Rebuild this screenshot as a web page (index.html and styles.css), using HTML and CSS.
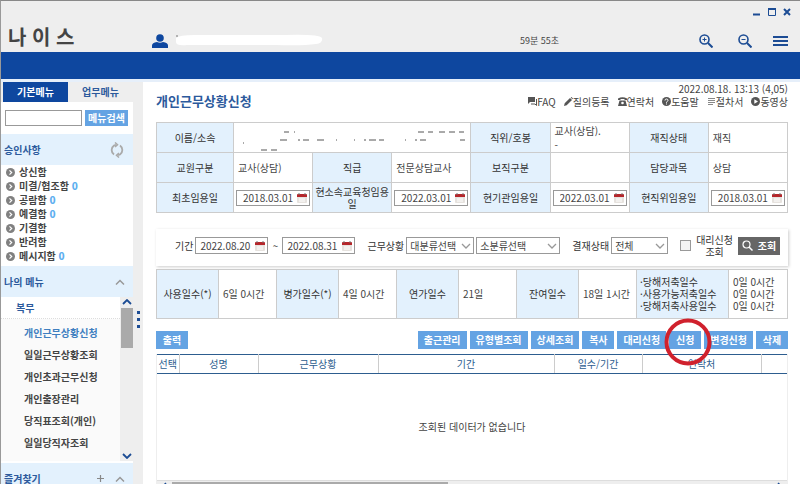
FILE: index.html
```html
<!DOCTYPE html>
<html lang="ko">
<head>
    <meta charset="UTF-8">
    <title>나이스 - 개인근무상황신청</title>
    <link rel="stylesheet" href="styles.css">
</head>
<body>
    <!-- icons used more than once -->
    <svg class="defs" width="0" height="0">
        <symbol id="cal" viewBox="0 0 10 10">
            <rect x="0" y="1" width="10" height="9" rx="1" fill="#e6e2de"/>
            <path d="M0 4V1.500Q0 1 1 1H9Q10 1 10 1.500V4z" fill="#b5262b"/>
            <path d="M2 0v2M8 0v2" stroke="#777" stroke-width="1"/>
            <path d="M2 6h6M2 8h6" stroke="#fff" stroke-width="1"/>
        </symbol>
        <symbol id="down" viewBox="0 0 10 6">
            <path d="M1 1l4 4 4-4" fill="none" stroke="#999" stroke-width="1.300"/>
        </symbol>
        <symbol id="go" viewBox="0 0 9 9">
            <circle cx="4.500" cy="4.500" r="4.500" fill="#808080"/>
            <path d="M3.500 2.300l2.200 2.200-2.200 2.200" fill="none" stroke="#fff" stroke-width="1.200"/>
        </symbol>
    </svg>

    <header>
        <div class="window-buttons">
            <button type="button" aria-label="최소화"><svg width="8" height="8"><path d="M0 6.500h7" stroke="#1c4c94" stroke-width="2"/></svg></button>
            <button type="button" aria-label="최대화"><svg width="8" height="8"><path d="M.5 1v6.500h7V1" fill="none" stroke="#1c4c94"/><path d="M0 1h8" stroke="#1c4c94" stroke-width="2"/></svg></button>
            <button type="button" aria-label="닫기"><svg width="8" height="8"><path d="M1 1l6 6M7 1L1 7" stroke="#1c4c94" stroke-width="2"/></svg></button>
        </div>
        <div class="header-row">
            <h1>나 이 스</h1>
            <div class="user">
                <svg width="16" height="14" viewBox="0 0 16 14"><circle cx="8" cy="4" r="3.800" fill="#0e479f"/><path d="M0 14v-2.500Q0 8.500 5 8q3 1.500 6 0 5 .5 5 3.500V14z" fill="#0e479f"/></svg>
                <svg width="148" height="13" viewBox="0 0 148 13"><path d="M1 4Q4 1 20 1h90q34-1 37 3 1 5-6 6-14 2-40 1H12Q1 12 1 8z" fill="#fff"/><path d="M1 2h2" stroke="#777"/></svg>
            </div>
            <span class="timer">59분 55초</span>
            <div class="header-tools">
                <button type="button" aria-label="확대"><svg width="14" height="14"><circle cx="5.500" cy="5.500" r="4.500" fill="none" stroke="#1c4c94" stroke-width="1.600"/><path d="M3.500 5.500h4M5.500 3.500v4" stroke="#1c4c94"/><path d="M9 9l4.500 4.500" stroke="#1c4c94" stroke-width="2"/></svg></button>
                <button type="button" aria-label="축소"><svg width="14" height="14"><circle cx="5.500" cy="5.500" r="4.500" fill="none" stroke="#1c4c94" stroke-width="1.600"/><path d="M3.500 5.500h4" stroke="#1c4c94"/><path d="M9 9l4.500 4.500" stroke="#1c4c94" stroke-width="2"/></svg></button>
                <button type="button" aria-label="전체메뉴"><svg width="15" height="12"><path d="M0 2h15M0 6h15M0 10h15" stroke="#1c4c94" stroke-width="1.800"/></svg></button>
            </div>
        </div>
    </header>
    <nav class="top-menu"></nav>

    <div class="layout">
        <aside>
            <div class="tabs">
                <button type="button" class="active">기본메뉴</button>
                <button type="button">업무메뉴</button>
            </div>
            <form class="menu-search">
                <input type="text" aria-label="메뉴검색">
                <button type="button">메뉴검색</button>
            </form>

            <div class="side-head">
                <h2>승인사항</h2>
                <svg width="16" height="16" viewBox="0 0 16 16" fill="none" stroke="#aaa" stroke-width="1.800"><path d="M5 12.500A5.500 5.500 0 0 1 5 3.500l2-.7M11 3.500a5.500 5.500 0 0 1 0 9l-2 .7"/><path d="M6 .5l2.500 2.200L6 5M10 11l-2.500 2.200L10 15.500" stroke-width="1.500"/></svg>
            </div>
            <ul class="approval">
                <li><svg width="9" height="9"><use href="#go"/></svg><a href="#">상신함</a></li>
                <li><svg width="9" height="9"><use href="#go"/></svg><a href="#">미결/협조함 <b>0</b></a></li>
                <li><svg width="9" height="9"><use href="#go"/></svg><a href="#">공람함 <b>0</b></a></li>
                <li><svg width="9" height="9"><use href="#go"/></svg><a href="#">예결함 <b>0</b></a></li>
                <li><svg width="9" height="9"><use href="#go"/></svg><a href="#">기결함</a></li>
                <li><svg width="9" height="9"><use href="#go"/></svg><a href="#">반려함</a></li>
                <li><svg width="9" height="9"><use href="#go"/></svg><a href="#">메시지함 <b>0</b></a></li>
            </ul>

            <div class="side-head">
                <h2>나의 메뉴</h2>
                <svg width="10" height="6"><path d="M1 5.500l4-4 4 4" fill="none" stroke="#999" stroke-width="1.500"/></svg>
            </div>
            <div class="my-menu">
                <div class="menu-list">
                    <h3>복무</h3>
                    <ul>
                        <li><a href="#" class="current">개인근무상황신청</a></li>
                        <li><a href="#">일일근무상황조회</a></li>
                        <li><a href="#">개인초과근무신청</a></li>
                        <li><a href="#">개인출장관리</a></li>
                        <li><a href="#">당직표조회(개인)</a></li>
                        <li><a href="#">일일당직자조회</a></li>
                    </ul>
                </div>
                <div class="scrollbar">
                    <svg width="10" height="6"><path d="M1 5l4-4 4 4" fill="none" stroke="#1c4c94" stroke-width="1.800"/></svg>
                    <div class="thumb"></div>
                    <svg width="10" height="6"><path d="M1 1l4 4 4-4" fill="none" stroke="#1c4c94" stroke-width="1.800"/></svg>
                </div>
            </div>

            <div class="side-head">
                <h2>즐겨찾기</h2>
                <svg class="plus" width="7" height="7"><path d="M0 3.500h7M3.500 0v7" stroke="#888" stroke-width="1.200"/></svg>
                <svg width="10" height="6"><path d="M1 5.500l4-4 4 4" fill="none" stroke="#999" stroke-width="1.500"/></svg>
            </div>
        </aside>

        <div class="splitter"><i></i><i></i><i></i></div>

        <main>
            <div class="page-head">
                <h2>개인근무상황신청</h2>
                <div class="page-info">
                    <time>2022.08.18. 13:13 (4,05)</time>
                    <div class="links">
                        <a href="#"><svg width="9" height="9"><path d="M0 0h7v5H2L0 7z" fill="#555"/><path d="M8.500 2v6.500L7 7H3" fill="none" stroke="#555"/></svg>FAQ</a>
                        <a href="#"><svg width="9" height="9"><path d="M0 9l.7-2.700L6 1l2 2-5.300 5.300zM6.700.5L7.500 0 9 1.500l-.6.8z" fill="#555"/></svg>질의등록</a>
                        <a href="#"><svg width="9" height="9"><path d="M0 3V1.500Q4.500-1 9 1.500V3H6.500V2h-4v1zM1.500 3.500h6L9 9H0z" fill="#555"/><circle cx="4.500" cy="6" r="1.300" fill="#fff"/></svg>연락처</a>
                        <a href="#"><svg width="9" height="9"><circle cx="4.500" cy="4.500" r="4.500" fill="#555"/><path d="M3 3.500Q3 2 4.500 2T6 3.400Q6 4.200 4.500 5v.7M4.500 6.500v1" fill="none" stroke="#fff"/></svg>도움말</a>
                        <a href="#"><svg width="9" height="9"><path d="M1 1.500h7M1 3.500h7M1 5.500h7M1 7.500h5" stroke="#888"/></svg>절차서</a>
                        <a href="#"><svg width="9" height="9"><circle cx="4.500" cy="4.500" r="4.500" fill="#555"/><path d="M3.300 2.200v4.600l3.700-2.300z" fill="#fff"/></svg>동영상</a>
                    </div>
                </div>
            </div>

            <table class="info">
                <colgroup><col class="first"><col span="7"></colgroup>
                <tr>
                    <th>이름/소속</th>
                    <td colspan="3">
                        <!-- name is masked -->
                        <svg class="mask" width="230" height="26"><path d="M44 7h5M54 7h1M178 7h6M188 7h5M199 7h6M209 7h6M219 7h5M3 18h1M40 15h7M58 15h2M63 15h6M77 15h7M96 15h1M114 15h1M124 15h2M129 15h7M139 15h5M165 15h1M175 15h2M180 15h6M220 15h5M21 25h6M31 25h6" stroke="#555"/></svg>
                    </td>
                    <th>직위/호봉</th>
                    <td class="top">교사(상담).<br>-</td>
                    <th>재직상태</th>
                    <td>재직</td>
                </tr>
                <tr>
                    <th>교원구분</th>
                    <td>교사(상담)</td>
                    <th>직급</th>
                    <td>전문상담교사</td>
                    <th>보직구분</th>
                    <td></td>
                    <th>담당과목</th>
                    <td>상담</td>
                </tr>
                <tr>
                    <th><label for="first">최초임용일</label></th>
                    <td class="field"><div class="date"><input type="text" id="first" value="2018.03.01"><svg width="10" height="10"><use href="#cal"/></svg></div></td>
                    <th><label for="office">현소속교육청임용일</label></th>
                    <td class="field"><div class="date"><input type="text" id="office" value="2022.03.01"><svg width="10" height="10"><use href="#cal"/></svg></div></td>
                    <th><label for="org">현기관임용일</label></th>
                    <td class="field"><div class="date"><input type="text" id="org" value="2022.03.01"><svg width="10" height="10"><use href="#cal"/></svg></div></td>
                    <th><label for="post">현직위임용일</label></th>
                    <td class="field"><div class="date"><input type="text" id="post" value="2018.03.01"><svg width="10" height="10"><use href="#cal"/></svg></div></td>
                </tr>
            </table>

            <form class="filter">
                <div class="group">
                    <label for="from">기간</label>
                    <div class="date"><input type="text" id="from" value="2022.08.20"><svg width="10" height="10"><use href="#cal"/></svg></div>
                    <span class="tilde">~</span>
                    <div class="date"><input type="text" id="to" aria-label="종료일" value="2022.08.31"><svg width="10" height="10"><use href="#cal"/></svg></div>
                </div>
                <div class="group">
                    <label for="kind">근무상황</label>
                    <div class="select medium"><select id="kind"><option>대분류선택</option></select><svg width="10" height="6"><use href="#down"/></svg></div>
                    <div class="select wide"><select aria-label="소분류"><option>소분류선택</option></select><svg width="10" height="6"><use href="#down"/></svg></div>
                </div>
                <div class="group">
                    <label for="state">결재상태</label>
                    <div class="select"><select id="state"><option>전체</option></select><svg width="10" height="6"><use href="#down"/></svg></div>
                </div>
                <div class="group">
                    <input type="checkbox" id="proxy">
                    <label for="proxy" class="two-line">대리신청<br>조회</label>
                    <button type="button" class="search"><svg width="11" height="11"><circle cx="4.500" cy="4.500" r="3.500" fill="none" stroke="#fff" stroke-width="1.200"/><path d="M7 7l3.500 3.500" stroke="#fff" stroke-width="1.500"/></svg>조회</button>
                </div>
            </form>

            <table class="days">
                <colgroup><col class="w62"><col class="w58"><col class="w62"><col class="w58"><col class="w62"><col class="w58"><col class="w62"><col class="w58"><col class="w92"><col></colgroup>
                <tr>
                    <th>사용일수(*)</th>
                    <td>6일 0시간</td>
                    <th>병가일수(*)</th>
                    <td>4일 0시간</td>
                    <th>연가일수</th>
                    <td>21일</td>
                    <th>잔여일수</th>
                    <td>18일 1시간</td>
                    <th class="left">·당해저축일수<br>·사용가능저축일수<br>·당해저축사용일수</th>
                    <td>0일 0시간<br>0일 0시간<br>0일 0시간</td>
                </tr>
            </table>

            <div class="actions">
                <button type="button">출력</button>
                <div class="right">
                    <button type="button">출근관리</button>
                    <button type="button">유형별조회</button>
                    <button type="button">상세조회</button>
                    <button type="button">복사</button>
                    <button type="button">대리신청</button>
                    <span class="marked"><button type="button">신청</button></span>
                    <button type="button">변경신청</button>
                    <button type="button">삭제</button>
                </div>
            </div>

            <div class="grid">
                <table>
                    <colgroup><col class="c-pick"><col class="c-name"><col class="c-kind"><col><col class="c-days"><col class="c-tel"><col class="c-last"></colgroup>
                    <thead>
                        <tr><th>선택</th><th>성명</th><th>근무상황</th><th>기간</th><th>일수/기간</th><th>연락처</th><th></th></tr>
                    </thead>
                    <tbody>
                        <tr><td colspan="7">조회된 데이터가 없습니다</td></tr>
                    </tbody>
                </table>
                <div class="h-scroll">
                    <svg width="5" height="8"><path d="M4 1L1 4l3 3" fill="none" stroke="#1c4c94" stroke-width="1.500"/></svg>
                    <div class="track"><div class="thumb"></div></div>
                    <svg width="5" height="8"><path d="M1 1l3 3-3 3" fill="none" stroke="#1c4c94" stroke-width="1.500"/></svg>
                </div>
            </div>
        </main>
    </div>
</body>
</html>
```
FILE: styles.css
```css
* {
    box-sizing: border-box;
}
body {
    margin: 0;
    height: 100vh;
    overflow: hidden;
    display: flex;
    flex-direction: column;
    border-top: 1px solid #888;
    border-left: 1px solid #999;
    font-family: "Noto Sans CJK KR", sans-serif;
    font-size: 10px;
    line-height: 14px;
    color: #444;
    background-color: #fff;
}
h1, h2, h3, ul {
    margin: 0;
    padding: 0;
}
ul {
    list-style: none;
}
a {
    color: inherit;
    text-decoration: none;
}
button, input, select {
    font: inherit;
    color: inherit;
    margin: 0;
    border-radius: 0;
}
button {
    border: none;
    padding: 0;
    background: none;
    cursor: pointer;
    white-space: nowrap;
}
svg {
    display: block;
    flex-shrink: 0;
}
.defs {
    position: absolute;
}

/* header */
header {
    background-color: #eee;
    padding: 7px 9px 3px 7px;
    flex-shrink: 0;
}
.window-buttons {
    display: flex;
    justify-content: flex-end;
    gap: 7px;
    height: 16px;
}
.window-buttons button {
    height: 8px;
}
.header-row {
    display: flex;
    align-items: center;
    height: 25px;
}
h1 {
    width: 144px;
    font-size: 20px;
    line-height: 25px;
    font-weight: bold;
}
.user {
    display: flex;
    align-items: center;
    gap: 7px;
    padding-top: 8px;
}
.timer {
    margin-left: auto;
    margin-right: 140px;
    padding-top: 8px;
    font-size: 9px;
}
.header-tools {
    display: flex;
    align-items: center;
    gap: 25px;
    padding: 8px 3px 0 0;
}
.header-tools button:last-child {
    margin-left: -4px;
}
.top-menu {
    height: 30px;
    flex-shrink: 0;
    background-color: #0e479f;
    border-bottom: 3px solid #e6effa;
}
.layout {
    display: flex;
    flex: 1;
    min-height: 0;
}

/* left menu */
aside {
    width: 132px;
    flex-shrink: 0;
    overflow: hidden;
}
.tabs {
    display: flex;
    padding-left: 2px;
    background-color: #eee;
}
.tabs button {
    flex: 1;
    height: 20px;
    font-weight: bold;
    color: #2c5a9c;
}
.tabs button.active {
    background-color: #0e479f;
    color: #fff;
}
.menu-search {
    display: flex;
    justify-content: space-between;
    padding: 8px 5px 8px 4px;
}
.menu-search input {
    width: 77px;
    height: 16px;
    border: 1px solid #999;
    background-color: #fff;
}
.menu-search button {
    width: 43px;
    height: 16px;
    background-color: #64a3e3;
    color: #fff;
    font-weight: bold;
}
.side-head {
    display: flex;
    align-items: center;
    height: 31px;
    padding: 0 8px 0 3px;
    background-color: #e3f1fd;
}
.side-head h2 {
    flex: 1;
    font-size: 10px;
    font-weight: bold;
    color: #2c5a9c;
}
.side-head .plus {
    margin-right: 11px;
}
.approval {
    padding-bottom: 3px;
    font-weight: bold;
}
.approval li {
    display: flex;
    align-items: center;
    gap: 4px;
    height: 14px;
    padding-left: 5px;
}
.approval b {
    color: #5fb0f0;
}
.my-menu {
    display: flex;
    margin-bottom: 2px;
}
.menu-list {
    flex: 1;
    font-weight: bold;
}
.menu-list h3 {
    height: 22px;
    padding: 4px 0 0 15px;
    font-size: 10px;
    color: #2c5a9c;
    border-bottom: 1px dotted #ddd;
}
.menu-list ul {
    height: 142px;
    padding-top: 3px;
    background-color: #fafafa;
}
.menu-list li {
    padding-left: 23px;
    line-height: 22px;
}
.menu-list .current {
    color: #3f7fc0;
}
.scrollbar {
    width: 13px;
    display: flex;
    flex-direction: column;
    align-items: center;
    padding: 2px 0;
    background-color: #eee;
}
.scrollbar .thumb {
    width: 12px;
    height: 40px;
    margin: 3px 0 auto;
    background-color: #aaa;
}
.splitter {
    width: 10px;
    flex-shrink: 0;
    display: flex;
    flex-direction: column;
    align-items: center;
    gap: 4px;
    padding-top: 229px;
    background-color: #eee;
}
.splitter i {
    width: 3px;
    height: 3px;
    background-color: #1c4c94;
}

/* page */
main {
    flex: 1;
    min-width: 0;
    display: flex;
    flex-direction: column;
    padding: 0 12px 0 13px;
}
.page-head {
    display: flex;
    justify-content: space-between;
    height: 40px;
    flex-shrink: 0;
}
.page-head h2 {
    padding-top: 9px;
    font-size: 13px;
    line-height: 20px;
    font-weight: bold;
    color: #2c5a9c;
}
.page-info {
    text-align: right;
    line-height: 13px;
}
.links {
    display: flex;
    gap: 8px;
}
.links a {
    display: flex;
    align-items: center;
}
table {
    width: 100%;
    table-layout: fixed;
    border-collapse: collapse;
}
th {
    font-weight: normal;
}
th, td {
    padding: 0;
}
.first {
    width: 77px;
}
.info th, .info td {
    height: 30px;
    border: 1px solid #ccc;
    line-height: 12px;
}
.info th, .days th {
    background-color: #e3f1fd;
    color: #333;
}
.info td {
    padding-left: 4px;
}
.info .top {
    line-height: 14px;
}
.info .field {
    padding: 0 2px;
}
.mask {
    margin-left: 2px;
}
.date {
    display: flex;
    align-items: center;
    height: 16px;
    padding-right: 2px;
    border: 1px solid #999;
    background-color: #fff;
}
.date input {
    flex: 1;
    width: 0;
    min-width: 0;
    height: 14px;
    padding: 0 0 0 6px;
    border: none;
    background: none;
}
.filter {
    display: flex;
    align-items: center;
    justify-content: space-between;
    flex-shrink: 0;
    height: 37px;
    margin-top: 16px;
    padding: 0 8px 4px 19px;
    box-shadow: 1px 1px 3px #ccc;
}
.group {
    display: flex;
    align-items: center;
    gap: 2px;
}
.filter label {
    white-space: nowrap;
    color: #333;
}
.filter .date {
    width: 73px;
    height: 17px;
}
.filter .date input {
    padding-left: 4px;
}
.tilde {
    width: 10px;
    text-align: center;
}
.select {
    position: relative;
    width: 57px;
}
.select.medium {
    width: 68px;
}
.select.wide {
    width: 84px;
}
.select select {
    width: 100%;
    height: 17px;
    display: block;
    appearance: none;
    padding: 0 0 0 3px;
    border: 1px solid #999;
    background-color: #fff;
}
.select svg {
    position: absolute;
    right: 3px;
    top: 6px;
    pointer-events: none;
}
input[type="checkbox"] {
    appearance: none;
    width: 11px;
    height: 11px;
    border: 1px solid #999;
    background-color: #f3f3f3;
}
.filter .two-line {
    margin: 0 3px;
    text-align: center;
    line-height: 12px;
}
.search {
    display: flex;
    align-items: center;
    justify-content: center;
    gap: 5px;
    width: 42px;
    height: 18px;
    background-color: #666;
    color: #fff;
    font-weight: bold;
}
.days {
    flex-shrink: 0;
    margin-top: 3px;
}
.days th, .days td {
    height: 49px;
    border: 1px solid #ccc;
    line-height: 12px;
    white-space: nowrap;
}
.days td {
    padding-left: 4px;
}
.days .left {
    padding-left: 3px;
    text-align: left;
}
.w62 {
    width: 62px;
}
.w58 {
    width: 58px;
}
.w92 {
    width: 92px;
}
.actions {
    display: flex;
    justify-content: space-between;
    margin: 12px 0 5px;
    flex-shrink: 0;
}
.actions .right {
    display: flex;
    gap: 3px;
}
.actions button {
    min-width: 32px;
    height: 18px;
    padding: 0 6px;
    background-color: #64a3e3;
    color: #fff;
    font-weight: bold;
}
/* red ring over the apply button */
.marked {
    position: relative;
}
.marked::after {
    content: "";
    position: absolute;
    left: 60%;
    top: 60%;
    box-sizing: border-box;
    width: 47px;
    height: 47px;
    transform: translate(-50%, -50%);
    border: 4px solid #d0212d;
    border-radius: 50%;
    pointer-events: none;
}
.grid {
    flex: 1;
    min-height: 0;
    border: 1px solid #eee;
    border-top: none;
}
.grid th {
    height: 19px;
    border: 1px solid #2d5d8f;
    border-left-color: #ccc;
    border-right-color: #ccc;
    color: #2d5d8f;
}
.grid th:first-child {
    border-left: none;
}
.grid th:last-child {
    border-right: none;
}
.grid td {
    height: 106px;
    text-align: center;
}
.c-pick {
    width: 22px;
}
.c-name {
    width: 79px;
}
.c-kind {
    width: 120px;
}
.c-days {
    width: 88px;
}
.c-tel {
    width: 119px;
}
.c-last {
    width: 26px;
}
.h-scroll {
    display: flex;
    align-items: flex-start;
    gap: 5px;
    height: 12px;
    padding: 1px 5px;
    background-color: #eee;
    border-top: 1px solid #ddd;
}
.track {
    flex: 1;
}
.h-scroll .thumb {
    width: 46%;
    height: 9px;
    background-color: #aaa;
}
```
